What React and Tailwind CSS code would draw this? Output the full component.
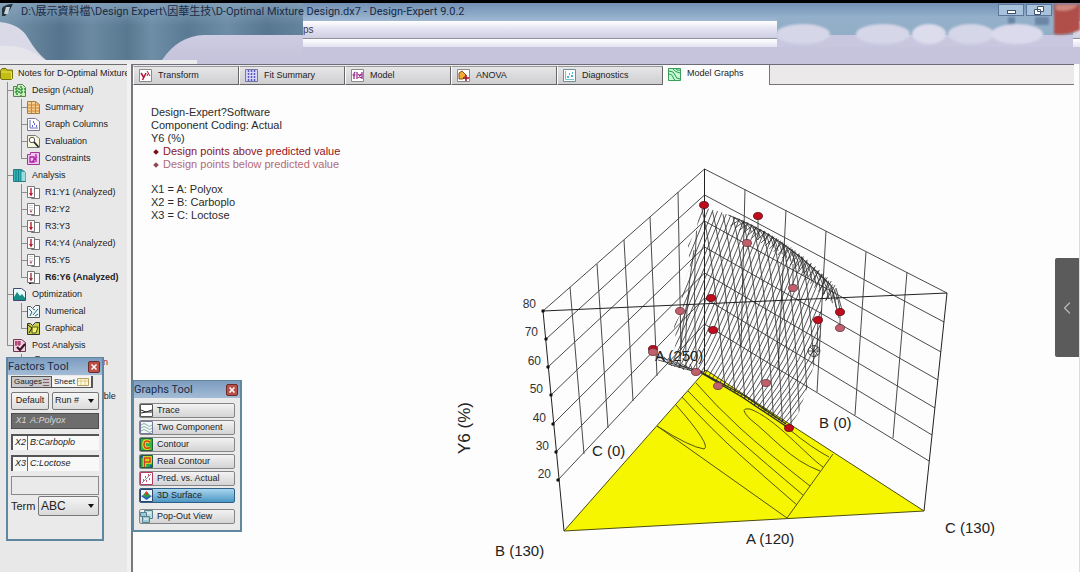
import { ChevronLeft } from "lucide-react";

const tree = [
  {
    label: "Design (Actual)",
    icon: "design",
    children: [
      { label: "Summary", icon: "summary" },
      { label: "Graph Columns", icon: "columns" },
      { label: "Evaluation", icon: "evaluation" },
      { label: "Constraints", icon: "constraints" },
    ],
  },
  {
    label: "Analysis",
    icon: "analysis",
    children: [
      { label: "R1:Y1 (Analyzed)", icon: "response" },
      { label: "R2:Y2", icon: "responseOff" },
      { label: "R3:Y3", icon: "response" },
      { label: "R4:Y4 (Analyzed)", icon: "response" },
      { label: "R5:Y5", icon: "responseOff" },
      { label: "R6:Y6 (Analyzed)", icon: "responseOn", active: true },
    ],
  },
  {
    label: "Optimization",
    icon: "optimization",
    children: [
      { label: "Numerical", icon: "numerical" },
      { label: "Graphical", icon: "graphical" },
    ],
  },
  {
    label: "Post Analysis",
    icon: "post",
    children: [
      { label: "Point Prediction", icon: "numerical", red: true },
      { label: "", icon: "numerical" },
      { label: "Coefficients Table", icon: "summary" },
    ],
  },
];

const tabs = [
  { label: "Transform", icon: "transform" },
  { label: "Fit Summary", icon: "fit" },
  { label: "Model", icon: "model" },
  { label: "ANOVA", icon: "anova" },
  { label: "Diagnostics", icon: "diagnostics" },
  { label: "Model Graphs", icon: "graphs", active: true },
];

const graphs = [
  { label: "Trace", icon: "trace" },
  { label: "Two Component", icon: "twoComponent" },
  { label: "Contour", icon: "contour" },
  { label: "Real Contour", icon: "realContour" },
  { label: "Pred. vs. Actual", icon: "predActual" },
  { label: "3D Surface", icon: "surface", active: true },
];

function Page({ stroke = "#777", fill = "#fff" }) {
  return (
    <>
      <path d="M4.500 2.500h8v10h-8z" fill={fill} stroke={stroke} />
      <path d="M.5.5h7v11h-7z" fill={fill} stroke={stroke} />
    </>
  );
}

const icons = {
  folder: (
    <>
      <path d="M.5 3.500 2 1.500h4l1 1.500h5.500v8.500l-1.500 1H2l-1.500-1z" fill="#c3bd16" stroke="#77700c" />
      <path d="M1 5h10.500v7" fill="none" stroke="#e9e35a" />
    </>
  ),
  design: (
    <>
      <path d="M.5 2.500h4v-2h5l3 3v9H.5z" fill="#c9f0bd" stroke="#5d7f58" />
      <path d="M2 5h10M2 8h10M4 3v9M8 2v10" stroke="#2e8b35" strokeWidth="1.400" strokeDasharray="2 1" />
    </>
  ),
  summary: (
    <>
      <path d="M.5.5h8l4 3v9h-12z" fill="#f8cf93" stroke="#a77b46" />
      <path d="M1 4h11M1 7h11M1 10h11M4.500 1v11M8.500 1v11" stroke="#cf8430" />
    </>
  ),
  columns: (
    <>
      <path d="M.5.5h8l4 3v9h-12z" fill="#fff" stroke="#77779a" />
      <path d="M3 2v8h8" stroke="#6d6dc8" fill="none" />
      <path d="M5 8h1M7 6h1M9 8h1M6 4h1" stroke="#3434c0" strokeWidth="1.500" />
    </>
  ),
  evaluation: (
    <>
      <path d="M.5.5h8l4 3v9h-12z" fill="#f9f7dd" stroke="#777" />
      <circle cx="5" cy="5" r="2.700" fill="#fff" stroke="#555" />
      <path d="m7 7 4.500 5" stroke="#222" strokeWidth="1.800" />
    </>
  ),
  constraints: (
    <>
      <path d="M.5 2.500h3v-2h9v12h-12z" fill="#f3c6ef" stroke="#a03698" />
      <path d="M3 5h4v5H3zM9 2v8M5 10l5-5" fill="none" stroke="#b01fa5" strokeWidth="1.300" />
    </>
  ),
  analysis: (
    <>
      <path d="M.5.5h8l4 3v9h-12z" fill="#35b3b8" stroke="#267a80" />
      <path d="M3 1v11M5.500 1v11M8 1v11" stroke="#0c7f87" />
      <path d="M8.500 3h4v9h-4z" fill="#9adde0" />
    </>
  ),
  response: (
    <>
      <Page />
      <path d="M4 2v6" stroke="#c0182c" strokeWidth="1.400" />
      <path d="m2 7 2 3.500L6 7z" fill="#c0182c" />
    </>
  ),
  responseOff: (
    <>
      <Page />
      <path d="M3 2v6M5 2v6" stroke="#aaa" strokeDasharray="1 1" />
      <path d="m2.500 7.500 1.500 2.500 1.500-2.500z" fill="#b04a5c" />
    </>
  ),
  responseOn: (
    <>
      <path d="M2 12.500h11V3" fill="none" stroke="#111" strokeWidth="2" />
      <Page />
      <path d="M4 2v6" stroke="#a03340" strokeWidth="1.400" />
      <path d="m2 7 2 3.500L6 7z" fill="#a03340" />
    </>
  ),
  optimization: (
    <>
      <path d="M.5.5h8l4 3v9h-12z" fill="#e9fbfb" stroke="#447" />
      <path d="M1 12V9l3-5 3 4 2-2 3 4v2z" fill="#169087" />
    </>
  ),
  numerical: (
    <>
      <path d="M.5 1.500h3l2 2 3-3h4v12h-12z" fill="#eef8fb" stroke="#555" />
      <path d="m2 4 3 3-2 4M6 10l5-6M8 11l3-2M6 4l2 1" stroke="#267" fill="none" />
    </>
  ),
  graphical: (
    <>
      <path d="M.5 1.500h3l2 2 3-3h4v12h-12z" fill="#c9cf48" stroke="#333" />
      <path d="M5 5h6l-2 6H5z" fill="#f6f36b" stroke="#4b5a10" />
      <path d="m1 3 4 3-3 5" stroke="#222" fill="none" />
    </>
  ),
  post: (
    <>
      <path d="M.5.5h8l4 3v9h-12z" fill="#f2cfe0" stroke="#6d3553" />
      <path d="M2 3h6M2 5h6M3 2v5M6 2v5" stroke="#9b1c50" />
      <path d="m4 8 3 3 5-6" stroke="#3a1024" strokeWidth="2" fill="none" />
    </>
  ),
  transform: (
    <>
      <path d="M.5.5h12v12H.5z" fill="#fff" stroke="#8b8b8b" />
      <path d="m2 4 2.500 4M7 4 3.500 11" stroke="#b3123b" strokeWidth="1.500" />
      <path d="m8 2 3 5M9.500 4 8 7" stroke="#b3123b" />
    </>
  ),
  fit: (
    <>
      <path d="M.5.5h12v12H.5z" fill="#d8d8fa" stroke="#7777a5" />
      <path d="M3.500 1v11M6.500 1v11M9.500 1v11" stroke="#5858b8" strokeWidth="1.500" strokeDasharray="2 1" />
    </>
  ),
  model: (
    <>
      <path d="M.5.5h12v12H.5z" fill="#fff" stroke="#8b8b8b" />
      <path d="M4.500 3Q3 3 3 5v5M1.500 6h3M6 3v7M11 3v7M7.500 5l2.500 4M10 5 7.500 9" stroke="#8c1a80" strokeWidth="1.200" fill="none" />
    </>
  ),
  anova: (
    <>
      <path d="M.5.5h12v12H.5z" fill="#fff" stroke="#8b8b8b" />
      <path d="M2 10V4l3-2 4 4-3 4z" fill="#f3aa36" stroke="#85560f" />
      <path d="M9 6v6M6 9h6" stroke="#a01025" strokeWidth="1.500" />
    </>
  ),
  diagnostics: (
    <>
      <path d="M.5.5h12v12H.5z" fill="#fff" stroke="#6f8f9a" />
      <path d="M2.500 2v8.500H11" stroke="#72c4d4" fill="none" />
      <path d="M4 8h2M6 5h1M8 7h2M9 4h1" stroke="#1a9fc5" strokeWidth="1.500" />
    </>
  ),
  graphs: (
    <>
      <path d="M.5.5h12v12H.5z" fill="#c9f6d4" stroke="#3a9d58" />
      <path d="M1 3q5 0 6 4t5 4M1 6q3 0 4 3t2 3M5 1q2 3 7 4M8 1q2 2 4 1" stroke="#1e9c4d" fill="none" />
    </>
  ),
  trace: (
    <>
      <path d="M.5.5h12v12H.5z" fill="#fff" stroke="#555" />
      <path d="m1 6 5 2h6M1 9l5-1 6-2" stroke="#222" fill="none" />
    </>
  ),
  twoComponent: (
    <>
      <path d="M.5.5h12v12H.5z" fill="#f2faf8" stroke="#779" />
      <path d="M1 4q3-3 6 0t5 0M1 7q3-3 6 0t5 0M1 10q3-3 6 0t5 0" stroke="#8ab0a8" fill="none" />
    </>
  ),
  contour: (
    <>
      <path d="M.5.5h12v12H.5z" fill="#35b24a" stroke="#1f5f3a" />
      <path d="M10 4Q4 1 4 6.500T10 9.500" stroke="#f4e01e" strokeWidth="3.500" fill="none" />
      <path d="M10 4Q4 1 4 6.500T10 9.500" stroke="#d0421c" strokeWidth="1.500" fill="none" />
    </>
  ),
  realContour: (
    <>
      <path d="M.5.5h12v12H.5z" fill="#27a84a" stroke="#1f5f3a" />
      <path d="M4.500 12V3H10v4H5" stroke="#f4e01e" strokeWidth="3.500" fill="none" />
      <path d="M4.500 12V3H10v4H5" stroke="#d0421c" strokeWidth="1.500" fill="none" />
      <path d="M1 1h2v2H1zM10 10h2v2h-2z" fill="#1a58b8" />
    </>
  ),
  predActual: (
    <>
      <path d="M.5.5h12v12H.5z" fill="#fff" stroke="#b23a63" />
      <path d="m2 11 9-9" stroke="#888" />
      <path d="M3 8h1M6 9h1M5 5h1M9 7h1M8 3h1" stroke="#c02048" strokeWidth="1.300" />
    </>
  ),
  surface: (
    <>
      <path d="M.5.5h12v12H.5z" fill="#e8f6ff" stroke="#346" />
      <path d="m1 7 5.500-2L12 7l-5.500 4z" fill="#2463c2" />
      <path d="m2.500 6.500 4-4 4 4-4 2z" fill="#2ea043" />
      <path d="m4.500 5 2-3 2 3-2 1z" fill="#d9381e" />
    </>
  ),
  popOut: (
    <>
      <path d="M4.500.5h8v8h-8z" fill="#b9dbe3" stroke="#55808c" />
      <path d="M.5 2.500h6v4h-6zM2.500 6.500h7v6h-7z" fill="#9cc9d6" stroke="#55808c" />
      <path d="M4 9h4M7 3h4" stroke="#fff" />
    </>
  ),
};

function Icon({ name }) {
  return (
    <svg viewBox="0 0 13 13" className="w-[13px] h-[13px] shrink-0" aria-hidden="true">
      {icons[name]}
    </svg>
  );
}

function Connector({ last }) {
  return (
    <span className="w-[6px] self-stretch flex flex-col shrink-0">
      <span className="flex-1 border-l border-b border-[#8d8d8d]" />
      <span className={last ? "flex-1" : "flex-1 border-l border-[#8d8d8d]"} />
    </span>
  );
}

function Sidebar() {
  return (
    <nav className="w-[127px] shrink-0 overflow-hidden whitespace-nowrap border-t border-[#6d6d6d] bg-[#e9e8e9] text-[9px] text-[#222]">
      <a href="#notes" className="flex items-center h-[17px] gap-[5px]">
        <Icon name="folder" />
        Notes for D-Optimal Mixture
      </a>
      <ul>
        {tree.map((group, i) => {
          const lastGroup = i === tree.length - 1;
          return (
            <li key={group.label}>
              <a href="#group" className="flex items-center h-[17px] pl-[7px]">
                <Connector last={lastGroup} />
                <Icon name={group.icon} />
                <span className="pl-[6px]">{group.label}</span>
              </a>
              <ul>
                {group.children.map((item, j) => (
                  <li key={item.label} className="flex items-center h-[17px] pl-[7px]">
                    <span
                      className={
                        lastGroup ? "w-[14px] self-stretch" : "w-[14px] self-stretch border-l border-[#8d8d8d]"
                      }
                    />
                    <Connector last={j === group.children.length - 1} />
                    <Icon name={item.icon} />
                    {item.label && (
                      <a
                        href="#item"
                        className={
                          item.active ? "pl-[5px] font-bold" : item.red ? "pl-[5px] text-[#8c1c28]" : "pl-[5px]"
                        }
                      >
                        {item.label}
                      </a>
                    )}
                  </li>
                ))}
              </ul>
            </li>
          );
        })}
      </ul>
    </nav>
  );
}

function Header() {
  return (
    <header className="relative">
      <div className="h-[3px] bg-black" />
      <div className="h-[18px] bg-linear-to-b from-[#7391b5] to-[#9db8d2]" />
      <div className="h-[17px] bg-linear-to-b from-white via-[#e2e1f1] to-[#cfcfe2] flex items-center pl-[303px] text-[10px] text-[#3a3550]">
        ps
      </div>
      <div className="h-px bg-[#8f8fa0]" />
      <div className="h-2 bg-linear-to-b from-white to-[#e3e3f2]" />
      <div className="h-[17px] bg-[#c5c4dc]" />

      <svg
        viewBox="0 0 1080 64"
        preserveAspectRatio="none"
        className="absolute inset-0 w-full h-full"
        aria-hidden="true"
      >
        <defs>
          <linearGradient id="streaks" x1="0" x2="1" y1="0" y2="0">
            <stop offset="0" stopColor="#7896ac" />
            <stop offset=".2" stopColor="#55748d" />
            <stop offset=".3" stopColor="#6b8ba2" />
            <stop offset=".42" stopColor="#587890" />
            <stop offset=".5" stopColor="#6e8ea6" />
            <stop offset=".62" stopColor="#5a7a94" />
            <stop offset=".75" stopColor="#6c8da5" />
            <stop offset=".88" stopColor="#577690" />
            <stop offset="1" stopColor="#64849c" />
          </linearGradient>
          <linearGradient id="fade" x1="0" x2="0" y1="0" y2="1">
            <stop offset="0" stopColor="#8aa7c2" stopOpacity=".7" />
            <stop offset=".4" stopColor="#8aa7c2" stopOpacity="0" />
          </linearGradient>
          <linearGradient id="sky" x1="0" x2="0" y1="0" y2="1">
            <stop offset="0" stopColor="#93afca" />
            <stop offset="1" stopColor="#93afc6" />
          </linearGradient>
          <linearGradient id="haze" x1="0" x2="0" y1="0" y2="1">
            <stop offset="0" stopColor="#cdcce2" />
            <stop offset="1" stopColor="#c4c3db" />
          </linearGradient>
          <filter id="soft" x="-5%" y="-20%" width="110%" height="140%">
            <feGaussianBlur stdDeviation="1" />
          </filter>
        </defs>
        <path d="M0 3h303v57H0z" fill="url(#streaks)" />
        <path d="M0 3h303v57H0z" fill="url(#fade)" />
        <path d="M0 22Q20 24 28 38T46 60H0z" fill="#d9d9e8" />
        <path d="M0 46Q20 44 36 54L44 60H0z" fill="#e6e5ec" />
        <path d="M162 60Q178 36 204 35h99v25z" fill="url(#haze)" />
        <path d="M0 60h197v4H0z" fill="#ebebee" />
        <path d="M197 60h106v4H197z" fill="#c5c4dc" />
        <path d="M777 16h296v20H777z" fill="url(#sky)" />
        <path d="M777 35h296v12H777z" fill="#c8c7df" />
        <g filter="url(#soft)">
          <path d="M1054 4h26v26q-14 6-26 4z" fill="#b04f48" />
          <path d="M1056 5h22q-8 8-22 5z" fill="#cf8a80" />
          <path d="M1008 17h7v9h-7zM1035 17h14v8h-14z" fill="#6c86a8" />
          <ellipse cx="803" cy="34" rx="27" ry="10" fill="#d6d6e9" />
          <ellipse cx="883" cy="34" rx="27" ry="10" fill="#d6d6e9" />
          <ellipse cx="929" cy="34" rx="17" ry="10" fill="#dcdced" />
          <ellipse cx="971" cy="34" rx="23" ry="10" fill="#d6d6e9" />
          <ellipse cx="1017" cy="34" rx="26" ry="10" fill="#dadaec" />
        </g>
        <path d="M2 16V8q4-4 11-4-3 7-8 12z" fill="#24333c" />
        <path d="M4 14 6 7h4L8 14z" fill="#c8d4da" />
      </svg>

      <div className="absolute inset-x-0 top-1 flex items-start justify-between pl-[21px] pr-[28px]">
        <h1 className="font-[Roboto,'Noto_Sans_CJK_TC',sans-serif] text-[11px] leading-4 text-[#1b2a44]">
          D:\展示資料檔\Design Expert\因華生技\D-Optimal Mixture Design.dx7 - Design-Expert 9.0.2
        </h1>
        <div className="flex gap-[2px]">
          <button
            aria-label="Minimize"
            className="w-[26px] h-3 border border-[#5c7799] bg-[#a9c2dc] flex items-end justify-center pb-px"
          >
            <span className="w-[9px] h-1 border border-[#41546f] bg-white" />
          </button>
          <button
            aria-label="Restore"
            className="w-[26px] h-3 border border-[#5c7799] bg-[#a9c2dc] flex items-center justify-center"
          >
            <svg viewBox="0 0 10 9" className="w-[10px] h-[9px]">
              <path d="M3.500.5h6v5h-6zM.5 3.500h6v5h-6z" fill="#fff" stroke="#41546f" />
            </svg>
          </button>
        </div>
      </div>
    </header>
  );
}

function TabBar() {
  return (
    <div className="h-[21px] flex items-end border-t border-[#6d6d7a] bg-[#ebe9ea]">
      {tabs.map((tab) => (
        <button
          key={tab.label}
          className={
            tab.active
              ? "w-[107px] h-full pl-[5px] pb-[2px] flex items-center gap-[6px] bg-[#fdfdfd] border-r border-[#777]"
              : "w-[106px] h-[19px] pl-[5px] flex items-center gap-[6px] bg-linear-to-b from-[#e6e5e7] to-[#cfced1] border border-l-white border-t-[#999] border-r-[#666] border-b-[#666]"
          }
        >
          <Icon name={tab.icon} />
          {tab.label}
        </button>
      ))}
      <div className="flex-1 h-full border-b border-[#777]" />
    </div>
  );
}

function Legend() {
  return (
    <div className="w-[307px] shrink-0 pl-[18px] pt-[21px] text-[11px] leading-[13px] text-[#2b2b2b]">
      <p>Design-Expert?Software</p>
      <p>Component Coding: Actual</p>
      <p>Y6 (%)</p>
      <p className="flex items-center gap-[5px] pl-[3px] text-[#8e1422]">
        <span className="w-1 h-1 rotate-45 bg-[#7a0f1b]" />
        Design points above predicted value
      </p>
      <p className="flex items-center gap-[5px] pl-[3px] text-[#b36a74]">
        <span className="w-1 h-1 rotate-45 bg-[#8d4a54]" />
        Design points below predicted value
      </p>
      <p className="pt-[12px]">X1 = A: Polyox</p>
      <p>X2 = B: Carboplo</p>
      <p>X3 = C: Loctose</p>
    </div>
  );
}

const leftTicks = [
  [543, 311], [546, 339], [548, 367], [551, 395], [553, 424], [556, 452], [558, 480],
];
const apexTicks = [169, 195, 221, 247, 273, 298, 324];
const rightTicks = [
  [947, 293], [944, 322], [941, 352], [938, 380], [935, 408], [932, 435], [929, 461],
];
const leftPosts = [
  [570, 287, 584, 454], [597, 264, 608, 428], [624, 240, 633, 401], [650, 217, 657, 376], [678, 192, 681, 350],
];
const rightPosts = [
  [745, 189, 741, 347], [786, 210, 778, 369], [826, 231, 817, 392], [866, 252, 855, 415], [907, 272, 893, 438],
];
const points = [
  [704, 205, 1], [758, 216, 1], [747, 243, 0], [793, 288, 0], [711, 298, 1], [680, 311, 0], [713, 330, 1],
  [818, 320, 1], [840, 312, 1], [840, 328, 0], [653, 349, 1], [653, 352, 0], [696, 372, 0], [718, 386, 0],
  [766, 383, 0], [789, 428, 1],
];

// point on a quadratic curve
function quad(a, c, b, t) {
  const u = 1 - t;
  return [
    u * u * a[0] + 2 * u * t * c[0] + t * t * b[0],
    u * u * a[1] + 2 * u * t * c[1] + t * t * b[1],
  ];
}

const ridge = (t) => quad([702, 209], [775, 224], [835, 287], t);

function meshPaths() {
  const strands = [];
  for (let i = 0; i < 11; i++) {
    const [x, y] = ridge((i / 11) * 0.8);
    strands.push(`M${x} ${y}Q${x + 12} ${y + 50} ${x + 24 - i * 0.8} ${y + 190}`);
  }
  strands.push("M697 222Q692 290 697 372M694 250Q684 310 686 368M690 290Q680 330 680 368");
  const hatch = [];
  for (let i = 0; i < 64; i++) {
    const x = 565 + i * 5;
    hatch.push(`M${x - 14} 440Q${x + 32} 390 ${x + 58} 330T${x + 112} 200`);
  }
  const crest = [];
  for (let i = 0; i < 24; i++) {
    const t = 0.24 + i * 0.032;
    const [x, y] = ridge(t);
    const drop = 8 + i * 0.9;
    crest.push(`M${x - 8} ${y - 4}Q${x + 5} ${y + 1} ${x + 6 + i * 0.1} ${y + drop}`);
    crest.push(`M${x + 3} ${y + 1}L${x - 6} ${y + 7 + i * 0.4}`);
  }
  return { strands: strands.join(""), hatch: hatch.join(""), crest: crest.join("") };
}

function SurfacePlot() {
  const mesh = meshPaths();
  return (
    <svg
      viewBox="440 85 634 487"
      className="flex-1 min-w-0 font-['Liberation_Sans',Arial,sans-serif]"
      role="img"
      aria-label="3D surface of Y6 (%)"
    >
      <defs>
        <clipPath id="surface">
          <path d="M699 208 706 208 Q775 224 835 287L838 300 822 301 820 345 808 385 800 410 790 428 742 397 703 374 672 366 676 340 674 325 683 310 681 290 690 268 688 245 697 230z" />
        </clipPath>
      </defs>

      <g stroke="#4a4a4a" fill="none">
        {leftTicks.map(([x, y], i) => (
          <path
            key={y}
            d={`M${x} ${y}L704.500 ${apexTicks[i]}L${rightTicks[i][0]} ${rightTicks[i][1]}`}
          />
        ))}
        {[...leftPosts, ...rightPosts].map(([x1, y1, x2, y2]) => (
          <path key={x1} d={`M${x1} ${y1}L${x2} ${y2}`} />
        ))}
        <path d="M704.500 169V375M543 311 564 531M947 293 924 511" stroke="#222" />
      </g>

      <path d="M564 531 706 370 924 511z" fill="#f6f600" stroke="#4c4c10" />
      <g stroke="#55550a" fill="none">
        <path d="M657 426 787 518 833 454" />
        <path d="M657 426Q690 447 704 449Q712 446 676 405" />
        <path d="M682 397Q712 430 740 455T797 505" />
        <path d="M688 391Q716 420 740 441T803 495" />
        <path d="M696 383Q716 406 740 428T810 486" />
        <path d="M823 467C806 455 775 418 750 409Q738 407 750 419C772 436 790 460 820 471" />
        <path d="M790 430Q812 448 829 457" />
      </g>

      <g stroke="#2b2b2b" fill="none" strokeWidth=".8">
        <g clipPath="url(#surface)">
          <path d={mesh.hatch} />
          <path d={mesh.strands} />
        </g>
        <path d={mesh.crest} />
        <path d="M655 352 668 364 703 374M656 356 675 362 692 371M660 352 664 362M664 357 672 366M668 358 680 368M676 360 684 370M682 364 700 374M658 360 704 372M690 364 694 373" />
        <path d="M703 374 742 397 790 429M699 371 745 396 786 424" strokeWidth="1.300" />
        <path d="M758 216V240M793 264V288M840 312V328M832 290 839 318M836 288 842 310M818 320 817 350" />
      </g>
      <path d="M543 311 947 293" stroke="#222" />
      <g fill="none" stroke="#333" strokeWidth=".8">
        <ellipse cx="814" cy="351" rx="6" ry="5.500" />
        <path d="M808 351h12M814 345v12M810 347l8 8M818 347l-8 8" />
      </g>

      {points.map(([x, y, above]) => (
        <ellipse
          key={`${x}-${y}`}
          cx={x}
          cy={y}
          rx="4.500"
          ry="3.500"
          fill={above ? "#c00d1e" : "#c0606c"}
          stroke={above ? "#5c0a12" : "#6a3038"}
          strokeWidth=".8"
        />
      ))}
      {leftTicks.map(([x, y]) => (
        <circle key={y} cx={x} cy={y} r="1.700" fill="#111" />
      ))}

      <g fill="#333" fontSize="12" textAnchor="end">
        <text x="536" y="308">80</text>
        <text x="538" y="336">70</text>
        <text x="541" y="365">60</text>
        <text x="543" y="393">50</text>
        <text x="546" y="422">40</text>
        <text x="549" y="450">30</text>
        <text x="551" y="478">20</text>
      </g>
      <g fill="#222" fontSize="15">
        <text x="655" y="361">A (250)</text>
        <text x="592" y="456">C (0)</text>
        <text x="819" y="428">B (0)</text>
        <text x="495" y="556">B (130)</text>
        <text x="746" y="544">A (120)</text>
        <text x="945" y="533">C (130)</text>
        <text fontSize="17" transform="translate(470 454) rotate(-90)">Y6 (%)</text>
      </g>
    </svg>
  );
}

function ToolTitle({ children }) {
  return (
    <div className="h-[17px] pr-[2px] flex items-center justify-between bg-linear-to-b from-[#7d9cc0] to-[#a3bcd6]">
      <h2 className="font-[Roboto,sans-serif] text-[11px] leading-4 text-[#1d2c45]">{children}</h2>
      <button
        aria-label="Close"
        className="w-3 h-3 rounded-xs border border-[#6e2b2b] bg-[#bb5146] flex items-center justify-center"
      >
        <svg viewBox="0 0 6 6" className="w-[6px] h-[6px]">
          <path d="m.5.5 5 5m0-5-5 5" stroke="#fff" strokeWidth="1.500" />
        </svg>
      </button>
    </div>
  );
}

function Arrow() {
  return (
    <svg viewBox="0 0 6 4" className="absolute right-[5px] top-1/2 -mt-[2px] w-[6px] h-1 pointer-events-none">
      <path d="M0 0h6L3 4z" fill="#111" />
    </svg>
  );
}

function Factor({ id, name, active }) {
  return (
    <button
      className={
        active
          ? "h-4 pl-[2px] flex items-center bg-[#6d6d6d] border border-[#4c4c4c] text-[#d6d6d6] italic"
          : "h-4 pl-px flex items-center bg-[#f8f8f8] border-t-2 border-l-2 border-[#555] text-[#222] italic"
      }
    >
      <span className={active ? "w-[14px]" : "w-[14px] border-r border-[#666]"}>{id}</span>
      <span className="pl-[2px]">{name}</span>
    </button>
  );
}

function FactorsTool() {
  return (
    <section className="absolute left-[6px] top-[357px] w-[98px] h-[184px] border-2 border-t border-[#5f87a0] bg-[#ebeaeb] text-[9px] text-[#222]">
      <ToolTitle>Factors Tool</ToolTitle>
      <div className="px-[3px] pt-px flex flex-col">
        <div className="flex h-3 text-[8px] leading-none">
          <button className="w-[41px] flex items-center justify-between px-[2px] border border-[#555] bg-[#c9c8ca]">
            Gauges
            <svg viewBox="0 0 6 8" className="w-[6px] h-2">
              <path d="M0 1.500h6M0 4.500h6M0 7.500h6" stroke="#8c5a62" />
            </svg>
          </button>
          <button className="w-[41px] flex items-center justify-between pl-[2px] pr-[2px] border-r-2 border-b border-[#555] bg-[#f4f4f4]">
            Sheet
            <svg viewBox="0 0 12 8" className="w-3 h-2">
              <path d="M.5.5h11v7H.5z" fill="#fffbd8" stroke="#b9a062" />
              <path d="M4 1v6M8 1v6M1 3h10" stroke="#dccb92" />
            </svg>
          </button>
        </div>
        <div className="flex gap-[3px] pt-1">
          <button className="w-[38px] h-[18px] rounded-xs border border-[#777] bg-linear-to-b from-[#f6f6f6] to-[#dcdcdc]">
            Default
          </button>
          <div className="relative flex-1">
            <select
              aria-label="Run"
              className="appearance-none w-full h-[18px] pl-[2px] rounded-xs border border-[#777] bg-linear-to-b from-[#f6f6f6] to-[#dcdcdc]"
            >
              <option>Run #</option>
            </select>
            <Arrow />
          </div>
        </div>
        <div className="flex flex-col gap-[5px] pt-[3px]">
          <Factor id="X1" name="A:Polyox" active />
          <Factor id="X2" name="B:Carboplo" />
          <Factor id="X3" name="C:Loctose" />
          <div className="h-[19px] border border-[#8a8a8a]" />
        </div>
        <div className="flex items-center pt-px text-[11px]">
          <label htmlFor="term" className="w-[27px]">
            Term
          </label>
          <div className="relative flex-1">
            <select
              id="term"
              className="appearance-none w-full h-5 pl-[2px] text-[12px] leading-none rounded-xs border border-[#777] bg-linear-to-b from-[#f4f4f4] to-[#dadada]"
            >
              <option>ABC</option>
            </select>
            <Arrow />
          </div>
        </div>
      </div>
    </section>
  );
}

function GraphsTool() {
  return (
    <section className="absolute left-[132px] top-[380px] w-[110px] h-[152px] border-2 border-t border-[#5f87a0] bg-[#ebeaeb] text-[9px] text-[#222]">
      <ToolTitle>Graphs Tool</ToolTitle>
      <div className="px-[5px] pt-[5px] flex flex-col gap-[2px]">
        {graphs.map((graph) => (
          <button
            key={graph.label}
            className={
              graph.active
                ? "h-[15px] flex items-center gap-1 rounded-xs border border-[#2f5f86] bg-linear-to-b from-[#a9d6ee] to-[#4a97c4]"
                : "h-[15px] flex items-center gap-1 rounded-xs border border-[#858585] bg-linear-to-b from-[#f3f3f3] to-[#d4d3d5]"
            }
          >
            <Icon name={graph.icon} />
            {graph.label}
          </button>
        ))}
        <button className="mt-1 h-[15px] flex items-center gap-1 rounded-xs border border-[#858585] bg-linear-to-b from-[#f3f3f3] to-[#d4d3d5]">
          <Icon name="popOut" />
          Pop-Out View
        </button>
      </div>
    </section>
  );
}

export default function App() {
  return (
    <div className="relative min-h-screen flex flex-col bg-[#ebebee] font-['Liberation_Sans',Arial,sans-serif]">
      <Header />
      <div className="flex-1 flex">
        <Sidebar />
        <div className="w-1 bg-[#f1f1f2]" />
        <main className="flex-1 min-w-0 flex flex-col border-l-2 border-[#77777c] bg-[#fdfdfd] text-[9px] text-[#222]">
          <TabBar />
          <div className="flex-1 flex">
            <Legend />
            <SurfacePlot />
          </div>
        </main>
        <div className="w-[6px] bg-[#fdfdfd] border-r border-[#dcdcdc]" />
      </div>
      <FactorsTool />
      <GraphsTool />
      <button
        aria-label="Expand panel"
        className="absolute right-px top-[258px] w-6 h-[99px] rounded-l-xs bg-[#5b5b5b] text-[#b8b8b8] flex items-center justify-center"
      >
        <ChevronLeft size={20} strokeWidth={1.5} />
      </button>
    </div>
  );
}
